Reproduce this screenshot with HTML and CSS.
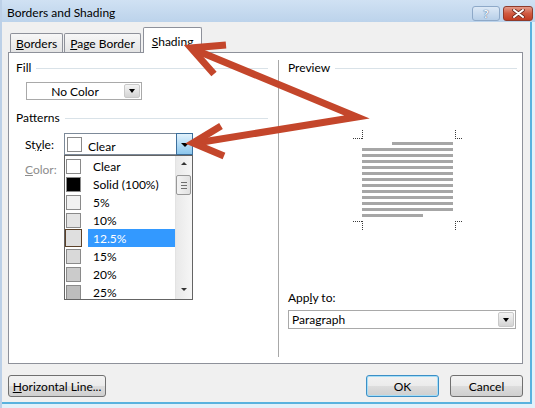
FILE: index.html
```html
<!DOCTYPE html>
<html lang="en">
<head>
    <meta charset="UTF-8">
    <title>Borders and Shading</title>
    <link rel="stylesheet" href="styles.css">
</head>
<body>
    <div class="window">
        <div class="titlebar">
            <span class="title">Borders and Shading</span>
            <div class="caption-buttons">
                <span class="cap-btn help">?</span>
                <span class="cap-btn close">
                    <svg width="13" height="9" viewBox="0 0 13 9">
                        <path d="M2 1 L11 8 M11 1 L2 8" stroke="#6b2a1e" stroke-width="3.6" stroke-linecap="round"/>
                        <path d="M2 1 L11 8 M11 1 L2 8" stroke="#fff" stroke-width="2" stroke-linecap="round"/>
                    </svg>
                </span>
            </div>
        </div>

        <div class="client">
            <div class="tabs">
                <div class="tab"><u>B</u>orders</div>
                <div class="tab"><u>P</u>age Border</div>
                <div class="tab active"><u>S</u>hading</div>
            </div>

            <div class="panel">
                <div class="col-left">
                    <div class="group-head"><span>Fill</span></div>
                    <div class="combo fill-combo">
                        <span class="combo-text">No Color</span>
                        <span class="combo-btn"></span>
                    </div>

                    <div class="group-head patterns"><span>Patterns</span></div>
                    <div class="field-row style-row">
                        <label class="field-label">St<u>y</u>le:</label>
                        <div class="combo style-combo">
                            <span class="swatch"></span>
                            <span class="combo-text">Clear</span>
                            <span class="combo-btn open"></span>

                            <div class="droplist">
                                <div class="items">
                                    <div class="item"><span class="swatch"></span><span class="item-text">Clear</span></div>
                                    <div class="item"><span class="swatch" style="background:#000"></span><span class="item-text">Solid (100%)</span></div>
                                    <div class="item"><span class="swatch" style="background:#f1f1f1"></span><span class="item-text">5%</span></div>
                                    <div class="item"><span class="swatch" style="background:#e4e4e4"></span><span class="item-text">10%</span></div>
                                    <div class="item sel"><span class="swatch" style="background:#dfdfdf"></span><span class="item-text">12.5%</span></div>
                                    <div class="item"><span class="swatch" style="background:#d9d9d9"></span><span class="item-text">15%</span></div>
                                    <div class="item"><span class="swatch" style="background:#cbcbcb"></span><span class="item-text">20%</span></div>
                                    <div class="item"><span class="swatch" style="background:#bdbdbd"></span><span class="item-text">25%</span></div>
                                </div>
                                <div class="scrollbar">
                                    <span class="sb-arrow up"></span>
                                    <span class="sb-thumb"><i></i><i></i><i></i></span>
                                    <span class="sb-arrow down"></span>
                                </div>
                            </div>
                        </div>
                    </div>
                    <div class="field-row color-row">
                        <label class="field-label disabled"><u>C</u>olor:</label>
                    </div>
                </div>

                <div class="col-right">
                    <div class="group-head preview-head"><span>Preview</span></div>
                    <svg class="preview" width="110" height="100" viewBox="0 0 110 100">
                        <g stroke="#3a3a3a" stroke-width="1" stroke-dasharray="1 1" fill="none">
                            <path d="M9.5 0 V9 M0 8.5 H9"/>
                            <path d="M102.5 0 V9 M102 8.5 H110"/>
                            <path d="M0 91.5 H9 M9.5 91 V100"/>
                            <path d="M102 91.5 H110 M102.5 91 V100"/>
                        </g>
                        <g fill="#a6a6a6">
                            <rect x="39" y="12" width="61" height="3"/>
                            <rect x="9" y="18" width="91" height="3"/>
                            <rect x="9" y="24" width="91" height="3"/>
                            <rect x="9" y="30" width="91" height="3"/>
                            <rect x="9" y="36" width="91" height="3"/>
                            <rect x="9" y="42" width="91" height="3"/>
                            <rect x="9" y="48" width="91" height="3"/>
                            <rect x="9" y="54" width="91" height="3"/>
                            <rect x="9" y="60" width="91" height="3"/>
                            <rect x="9" y="66" width="91" height="3"/>
                            <rect x="9" y="72" width="91" height="3"/>
                            <rect x="9" y="78" width="91" height="3"/>
                            <rect x="9" y="84" width="61" height="3"/>
                        </g>
                    </svg>
                    <label class="apply-label">App<u>l</u>y to:</label>
                    <div class="combo apply-combo">
                        <span class="combo-text">Paragraph</span>
                        <span class="combo-btn"></span>
                    </div>
                </div>
            </div>

            <div class="dialog-buttons">
                <button class="btn hline"><u>H</u>orizontal Line...</button>
                <div class="btn-group">
                    <button class="btn default">OK</button>
                    <button class="btn">Cancel</button>
                </div>
            </div>
        </div>

        <!-- red callout arrows drawn on top of the dialog -->
        <svg class="callouts" width="535" height="408" viewBox="0 0 535 408">
            <g stroke="#c4462b" stroke-width="7" fill="none" stroke-linejoin="miter" stroke-miterlimit="10">
                <path d="M193 49 L357 117 L196 143"/>
                <path d="M226 45 L191 48 L214 74"/>
                <path d="M221 126 L193 143 L224 156"/>
            </g>
        </svg>
    </div>
</body>
</html>
```

FILE: styles.css
```css
body {
    margin: 0;
    font-family: Lato, "Noto Sans", sans-serif;
    font-size: 12px;
    color: #000;
    background: #e2f1fa;
}
.window {
    position: relative;
    width: 535px;
    height: 408px;
    box-sizing: border-box;
    border-left: 2px solid #bcd0e7;
    padding: 0 3px 4px 0;
    background: #e2f1fa;
    display: flex;
    flex-direction: column;
    overflow: hidden;
}

/* title bar */
.titlebar {
    height: 22px;
    margin-right: -3px;
    padding-left: 5px;
    display: flex;
    align-items: center;
    background: linear-gradient(#d0e1f3, #bcd3eb);
}
.title {
    font-size: 12px;
    margin-top: 2px;
}
.caption-buttons {
    margin-left: auto;
    margin-right: 2px;
    margin-top: 5px;
    display: flex;
    gap: 3px;
}
.cap-btn {
    height: 13px;
    border-radius: 3px;
    display: flex;
    align-items: center;
    justify-content: center;
}
.help {
    width: 26px;
    border: 1px solid #8ea9c8;
    background: linear-gradient(#dde9f6, #b7cfe8);
    color: #f4f8fc;
    font-weight: bold;
    font-size: 12px;
    text-shadow: 0 0 1px #4d6d93, 0 0 1px #4d6d93;
}
.close {
    width: 28px;
    border: 1px solid #8e3b2c;
    background: linear-gradient(#e49a8a, #d15a40 50%, #c23c22);
}

/* client area */
.client {
    flex: 1;
    background: #f0f0f0;
    border-right: 2px solid #59b2de;
    border-bottom: 2px solid #59b2de;
    padding: 0 6px;
    display: flex;
    flex-direction: column;
}

.tabs {
    margin-top: 5px;
    height: 25px;
    padding-left: 2px;
    display: flex;
    align-items: flex-end;
}
.tab {
    height: 18px;
    padding: 0 5px;
    border: 1px solid #8e919a;
    border-bottom: none;
    border-radius: 2px 2px 0 0;
    background: linear-gradient(#f7f7f7, #e4e4e4);
    line-height: 19px;
    margin-right: 1px;
}
.tab.active {
    height: 25px;
    padding: 0 8px;
    margin-left: 1px;
    margin-bottom: -1px;
    background: #fff;
    line-height: 28px;
    position: relative;
    z-index: 1;
}

.panel {
    width: 515px;
    height: 312px;
    box-sizing: border-box;
    border: 1px solid #8e919a;
    background: #fff;
    display: flex;
}

/* group headings with a rule after the text */
.group-head {
    height: 14px;
    line-height: 14px;
    display: flex;
    align-items: center;
}
.group-head::after {
    content: "";
    flex: 1;
    margin-left: 5px;
    border-top: 1px solid #d9e2e8;
}

.col-left {
    width: 269px;
}
.col-left .group-head {
    margin-top: 8px;
    padding: 0 10px 0 7px;
}
.col-left .patterns {
    margin-top: 11px;
}

.combo {
    position: relative;
    box-sizing: border-box;
    border: 1px solid #a9a9a9;
    background: #fff;
    display: flex;
    align-items: center;
}
.combo-text {
    flex: 1;
}
.combo-btn {
    align-self: stretch;
    width: 14px;
    margin: 1px;
    border: 1px solid #c9c9c9;
    border-radius: 2px;
    background: linear-gradient(#f4f4f4, #e4e4e4 50%, #d4d4d4);
    position: relative;
}
.combo-btn::after {
    content: "";
    position: absolute;
    left: 50%;
    top: 50%;
    margin: -2px 0 0 -3px;
    border-left: 3px solid transparent;
    border-right: 3px solid transparent;
    border-top: 4px solid #000;
}

.fill-combo {
    width: 116px;
    height: 18px;
    margin: 7px 0 0 17px;
}
.fill-combo .combo-text {
    text-align: center;
}

.field-row {
    display: flex;
    align-items: center;
    padding-left: 16px;
}
.field-label {
    width: 39px;
}
.field-label.disabled {
    color: #8d8d8d;
}
.style-row {
    margin-top: 8px;
}
.style-combo {
    width: 129px;
    height: 22px;
    border-color: #7d8a99;
}
.style-combo .swatch {
    margin: 0 6px 0 2px;
}
.style-combo .combo-text {
    padding-top: 4px;
}
.combo-btn.open {
    width: 15px;
    margin: -1px -1px -1px 0;
    border: 1px solid #3c6f9c;
    border-radius: 0;
    background: linear-gradient(#e2f2fc, #b4dcf6 50%, #8cc6ec);
}
.combo-btn.open::after {
    margin: -1px 0 0 -4px;
    border-left-width: 4px;
    border-right-width: 4px;
}
.color-row {
    margin-top: 5px;
    height: 18px;
}

.swatch {
    width: 15px;
    height: 15px;
    box-sizing: border-box;
    border: 1px solid #8a8a8a;
    background: #fff;
    flex: none;
}

/* open style list */
.droplist {
    position: absolute;
    left: -1px;
    top: 21px;
    width: 129px;
    height: 145px;
    box-sizing: border-box;
    border: 1px solid #646464;
    background: #fff;
    display: flex;
    z-index: 2;
}
.items {
    flex: 1;
    padding-top: 1px;
    overflow: hidden;
}
.item {
    height: 18px;
    display: flex;
    align-items: center;
}
.item .swatch {
    margin-left: 1px;
}
.item-text {
    flex: 1;
    align-self: stretch;
    margin-left: 1px;
    padding: 2px 0 0 5px;
    line-height: 16px;
}
.item.sel .swatch {
    width: 17px;
    height: 18px;
    margin-left: 0;
    border-color: #5b4129;
}
.item.sel .item-text {
    margin-left: 0;
    background: #3399ff;
    color: #fff;
}
.scrollbar {
    width: 16px;
    border-left: 1px solid #e3e3e3;
    background: linear-gradient(90deg, #e9e9e9, #f6f6f6);
    position: relative;
}
.sb-arrow {
    position: absolute;
    left: 5px;
    border-left: 3px solid transparent;
    border-right: 3px solid transparent;
}
.sb-arrow.up {
    top: 6px;
    border-bottom: 3px solid #333;
}
.sb-arrow.down {
    bottom: 8px;
    border-top: 3px solid #333;
}
.sb-thumb {
    position: absolute;
    left: 0;
    top: 19px;
    width: 15px;
    height: 20px;
    box-sizing: border-box;
    border: 1px solid #989898;
    border-radius: 2px;
    background: linear-gradient(90deg, #f3f3f3, #e1e1e1);
    display: flex;
    flex-direction: column;
    align-items: center;
    justify-content: center;
    gap: 2px;
}
.sb-thumb i {
    display: block;
    width: 6px;
    border-top: 1px solid #6f6f6f;
}

.col-right {
    flex: 1;
    margin: 7px 0 6px;
    border-left: 1px solid #a8a8a8;
    display: flex;
    flex-direction: column;
}
.preview-head {
    margin-top: 1px;
    padding: 0 5px 0 9px;
}
.preview {
    display: block;
    margin: 55px 0 0 74px;
}
.apply-label {
    height: 14px;
    line-height: 14px;
    margin: 61px 0 0 9px;
}
.apply-combo {
    width: 228px;
    height: 19px;
    margin: 5px 0 0 9px;
    padding-left: 3px;
}

/* bottom buttons */
.dialog-buttons {
    margin-top: 11px;
    display: flex;
    justify-content: space-between;
}
.btn-group {
    display: flex;
    gap: 11px;
    margin-right: 1px;
}
.btn {
    height: 22px;
    font-family: inherit;
    font-size: 12px;
    color: #000;
    border: 1px solid #707070;
    border-radius: 3px;
    background: linear-gradient(#f2f2f2, #ebebeb 50%, #dddddd 50%, #cfcfcf);
    padding: 0;
}
.btn.hline {
    width: 98px;
}
.btn-group .btn {
    width: 73px;
}
.btn.default {
    border-color: #3c8fc6;
    box-shadow: inset 0 0 0 1px #a6def7;
}

.callouts {
    position: absolute;
    left: -2px;
    top: 0;
    pointer-events: none;
    z-index: 5;
}
```
